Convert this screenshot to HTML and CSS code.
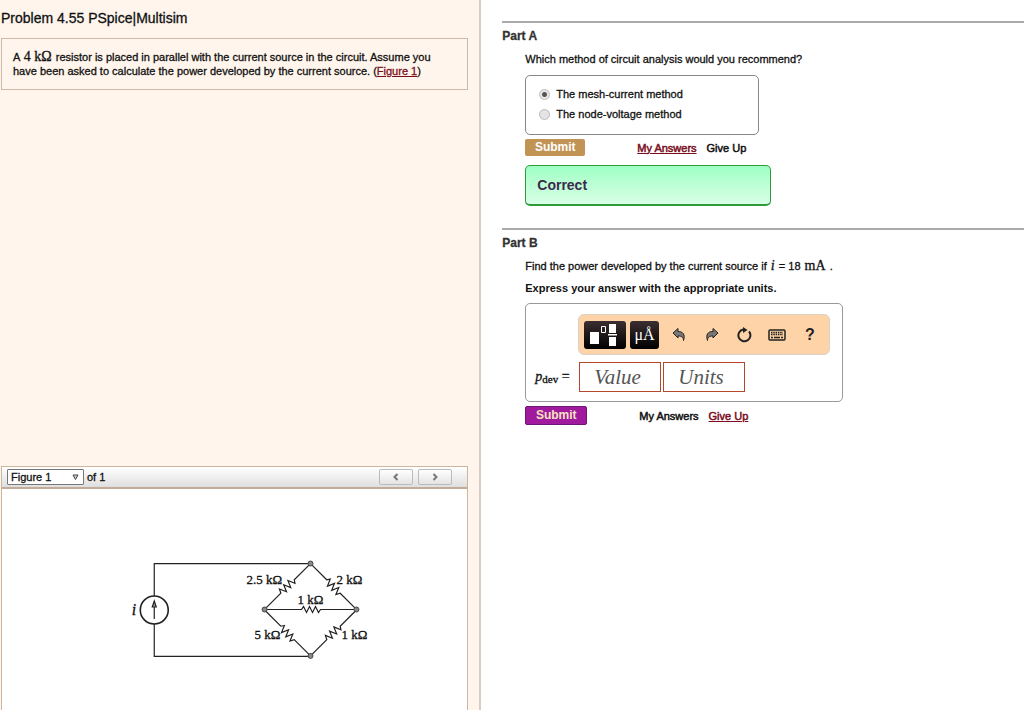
FILE: index.html
```html
<!DOCTYPE html>
<html lang="en">
<head>
    <meta charset="utf-8">
    <title>Problem 4.55 PSpice|Multisim</title>
    <link rel="stylesheet" href="styles.css">
</head>
<body>
    <div class="problem-pane">
        <h1>Problem 4.55 PSpice|Multisim</h1>
        <p class="problem-text">A <span class="math">4 kΩ</span> resistor is placed in parallel with the current source in the circuit. Assume you have been asked to calculate the power developed by the current source. (<a href="#figure">Figure 1</a>)</p>

        <section class="figure" id="figure">
            <div class="figure-bar">
                <div class="select-wrap">
                    <select id="figure-select" aria-label="Figure">
                        <option>Figure 1</option>
                    </select>
                    <svg width="7" height="7" viewBox="0 0 7 7"><path d="M1 1h5L3.5 5.5z" fill="#ccc" stroke="#444"/></svg>
                </div>
                <label for="figure-select">of 1</label>
                <div class="figure-nav">
                    <button type="button" aria-label="Previous figure"><svg width="8" height="8" viewBox="0 0 8 8"><path d="M5.5 1L2.5 4l3 3"/></svg></button>
                    <button type="button" aria-label="Next figure"><svg width="8" height="8" viewBox="0 0 8 8"><path d="M2.5 1l3 3-3 3"/></svg></button>
                </div>
            </div>
            <div class="figure-body">
                <svg class="circuit" width="466" height="221" viewBox="1 489 466 221">
                    <defs>
                        <path id="resistor" d="M0 0H23l2-3 3 7 3-7 3 7 3-7 3 7 2-4H65"/>
                    </defs>
                    <g fill="none" stroke="#222" stroke-width="1.2">
                        <path d="M310 563.5H153.5V596M153.5 624V656.5H310"/>
                        <circle cx="153.5" cy="610" r="14" stroke-width="1.6"/>
                        <path d="M153.5 619V607"/>
                        <path d="M153.5 601l-2 6h4z" fill="#999"/>
                        <use href="#resistor" transform="translate(310 563.5) rotate(135)"/>
                        <use href="#resistor" transform="translate(310 563.5) rotate(45)"/>
                        <use href="#resistor" transform="translate(264 610) rotate(45)"/>
                        <use href="#resistor" transform="translate(356 610) rotate(135)"/>
                        <path d="M264 609.5H301l2-3 3 6 3-6 3 6 3-6 3 6 2-3H356"/>
                    </g>
                    <g fill="#888" stroke="#444">
                        <circle cx="310" cy="563.5" r="2.5"/>
                        <circle cx="264" cy="609.5" r="2.5"/>
                        <circle cx="356" cy="609.5" r="2.5"/>
                        <circle cx="310" cy="656" r="2.5"/>
                    </g>
                    <text x="131" y="615" class="var">i</text>
                    <text x="246" y="584">2.5 kΩ</text>
                    <text x="336" y="584">2 kΩ</text>
                    <text x="297" y="604">1 kΩ</text>
                    <text x="254" y="639">5 kΩ</text>
                    <text x="341" y="639">1 kΩ</text>
                </svg>
            </div>
        </section>
    </div>

    <main class="parts-pane">
        <section class="part">
            <h2>Part A</h2>
            <div class="part-body">
                <p>Which method of circuit analysis would you recommend?</p>
                <div class="choices">
                    <label><input type="radio" name="method" checked>The mesh-current method</label>
                    <label><input type="radio" name="method">The node-voltage method</label>
                </div>
                <div class="actions">
                    <button type="button" class="submit submit-done">Submit</button>
                    <a href="#answers">My Answers</a>
                    <span>Give Up</span>
                </div>
                <div class="feedback">Correct</div>
            </div>
        </section>

        <section class="part">
            <h2>Part B</h2>
            <div class="part-body">
                <p>Find the power developed by the current source if <span class="math"><i>i</i></span> = 18 <span class="math">mA</span> .</p>
                <p class="instructions">Express your answer with the appropriate units.</p>
                <div class="answer-box">
                    <div class="toolbar">
                        <button type="button" class="dark" aria-label="Templates">
                            <svg width="42" height="28" viewBox="0 0 42 28"><g fill="#fff"><path d="M6 11h9v12H6zM25 3h7v9h-7zM25 16h7v9h-7zM24 13h9v1.500h-9z"/></g><path d="M17.500 5.500h4v6h-4z" fill="none" stroke="#fff"/></svg>
                        </button>
                        <button type="button" class="dark symbols">μÅ</button>
                        <button type="button" class="tool" aria-label="Undo">
                            <svg width="16" height="16" viewBox="0 0 16 16"><path d="M2 6l5-4.500v3c5 0 7.500 3 5.500 9 0-3-1.500-4.500-5.500-4.500v2z" fill="#777" stroke="#222"/></svg>
                        </button>
                        <button type="button" class="tool" aria-label="Redo">
                            <svg width="16" height="16" viewBox="0 0 16 16"><path d="M14 6L9 1.500v3c-5 0-7.500 3-5.500 9 0-3 1.500-4.500 5.500-4.500v2z" fill="#777" stroke="#222"/></svg>
                        </button>
                        <button type="button" class="tool" aria-label="Reset">
                            <svg width="16" height="16" viewBox="0 0 16 16"><path d="M12 4.500A6 6 0 1 1 6 2.500" fill="none" stroke="#222" stroke-width="2"/><path d="M6 0l4.500 3L6 6z" fill="#222"/></svg>
                        </button>
                        <button type="button" class="tool" aria-label="Keyboard">
                            <svg width="18" height="12" viewBox="0 0 18 12"><rect x="1" y="1" width="16" height="10" rx="1" fill="#fbd0a2" stroke="#222" stroke-width="1.500"/><path d="M3 3.500h12M3 5.500h12" stroke="#222" stroke-width="1.500" stroke-dasharray="1.500 .8"/><path d="M3 8.500h2M6 8.500h6M13 8.500h2" stroke="#222" stroke-width="1.500"/></svg>
                        </button>
                        <button type="button" class="tool help">?</button>
                    </div>
                    <div class="answer-row">
                        <label for="value"><i>p</i><sub>dev</sub> =</label>
                        <input type="text" id="value" placeholder="Value">
                        <input type="text" id="units" placeholder="Units" aria-label="Units">
                    </div>
                </div>
                <div class="actions">
                    <button type="button" class="submit submit-active">Submit</button>
                    <span>My Answers</span>
                    <a href="#giveup">Give Up</a>
                </div>
            </div>
        </section>
    </main>
</body>
</html>
```

FILE: styles.css
```css
* {
    box-sizing: border-box;
}

body {
    margin: 0;
    display: flex;
    min-height: 100vh;
    background: #fff;
    color: #111;
    font-family: "Liberation Sans", Arial, sans-serif;
    font-size: 11px;
    line-height: 14px;
    -webkit-text-stroke: 0.3px;
}

h1, h2, p {
    margin: 0;
}

a {
    color: #7a0d1c;
}

button {
    padding: 0;
    cursor: pointer;
}

.math {
    margin: 0 1px;
    font-family: "Liberation Serif", "Times New Roman", serif;
    font-size: 14px;
    line-height: 1;
}

/* left side */
.problem-pane {
    display: flex;
    flex-direction: column;
    width: 47%;
    padding: 9px 11px 0 1px;
    background: #fff5ec;
    border-right: 2px solid #d9cdc3;
}

h1 {
    font-size: 14px;
    font-weight: normal;
    line-height: 18px;
}

.problem-text {
    margin-top: 11px;
    padding: 11px 20px 11px 11px;
    border: 1px solid #cdb9a8;
}

.figure {
    margin-top: auto;
    border: 1px solid #cbb69f;
    border-bottom: 0;
    background: #fff;
}

.figure-bar {
    display: flex;
    align-items: center;
    gap: 3px;
    height: 22px;
    padding: 0 15px 0 5px;
    background: linear-gradient(#fff, #dfdfdf);
    border-bottom: 2px solid #c4ab98;
}

.select-wrap {
    position: relative;
}

.select-wrap select {
    display: block;
    width: 77px;
    height: 16px;
    padding: 0 3px;
    appearance: none;
    background: #fff;
    border: 1px solid #777;
    border-radius: 1px;
    color: #111;
    font: inherit;
    line-height: 14px;
    -webkit-text-stroke: inherit;
}

.select-wrap svg {
    position: absolute;
    top: 5px;
    right: 5px;
    pointer-events: none;
}

.figure-nav {
    display: flex;
    gap: 5px;
    margin-left: auto;
}

.figure-nav button {
    display: flex;
    align-items: center;
    justify-content: center;
    width: 34px;
    height: 16px;
    background: linear-gradient(#fff, #e4e4e4);
    border: 1px solid #bbb;
    border-radius: 2px;
}

.figure-nav path {
    fill: none;
    stroke: #777;
    stroke-width: 2;
}

.circuit {
    display: block;
    max-width: 100%;
}

.circuit text {
    font-family: "Liberation Serif", "Times New Roman", serif;
    font-size: 13px;
    fill: #111;
    stroke: #111;
    stroke-width: 0.3px;
    -webkit-text-stroke: 0;
}

.circuit .var {
    font-size: 16px;
    font-style: italic;
}

/* right side */
.parts-pane {
    flex: 1;
    padding: 21px 0 0 21px;
}

.part {
    padding-top: 6px;
    border-top: 2px solid #aaa;
}

.part + .part {
    margin-top: 22px;
}

h2 {
    font-size: 12px;
    line-height: 14px;
    color: #333;
}

.part-body {
    padding: 9px 0 0 23px;
}

.choices {
    display: flex;
    flex-direction: column;
    gap: 6px;
    width: 234px;
    height: 60px;
    margin-top: 9px;
    padding: 11px 12px;
    border: 1px solid #888;
    border-radius: 5px;
}

.choices label {
    display: flex;
    align-items: center;
    gap: 5px;
}

.choices input {
    width: 11px;
    height: 11px;
    margin: 0 1px;
    appearance: none;
    background: #e4e4e4;
    border: 1px solid #bbb;
    border-radius: 50%;
}

.choices input:checked {
    background: radial-gradient(circle, #555 0 2px, #e8e8e8 3px);
}

.actions {
    display: flex;
    align-items: center;
    gap: 10px;
    margin-top: 4px;
    -webkit-text-stroke: 0.5px;
}

.submit {
    height: 17px;
    border-radius: 2px;
    font-family: inherit;
    font-size: 12px;
    font-weight: bold;
    line-height: 15px;
    -webkit-text-stroke: 0;
}

.submit + * {
    margin-left: 42px;
}

.submit-done {
    width: 60px;
    border: 0;
    background: #c19355;
    color: #fff;
}

.submit-active {
    width: 62px;
    height: 19px;
    border: 1px solid #6d1673;
    background: #a01a9e;
    color: #fbe3c0;
}

.feedback {
    width: 246px;
    margin-top: 9px;
    padding: 12px 11px;
    border: 1px solid #2f9a3c;
    border-bottom-width: 2px;
    border-radius: 5px;
    background: linear-gradient(#9fffc4, #d9ffe6);
    color: #3b2a4e;
    font-size: 14px;
    font-weight: bold;
    -webkit-text-stroke: 0;
}

.instructions {
    margin-top: 8px;
    font-weight: bold;
    -webkit-text-stroke: 0;
}

.answer-box {
    width: 318px;
    margin-top: 8px;
    padding: 10px 12px 9px 9px;
    border: 1px solid #999;
    border-radius: 5px;
}

.toolbar {
    display: flex;
    align-items: center;
    gap: 4px;
    height: 41px;
    margin-left: 43px;
    padding: 0 5px;
    background: #fed3a7;
    border: 1px solid #ddd0c4;
    border-radius: 6px;
}

.dark {
    width: 42px;
    height: 28px;
    border: 0;
    border-radius: 3px;
    background: linear-gradient(#3c2e31, #000);
    color: #fff;
}

.dark svg {
    display: block;
}

.symbols {
    width: 29px;
    font-family: "Liberation Serif", "Times New Roman", serif;
    font-size: 16px;
    -webkit-text-stroke: 0;
}

.tool {
    display: flex;
    align-items: center;
    justify-content: center;
    width: 29px;
    height: 28px;
    border: 0;
    background: none;
    color: #222;
}

.symbols + .tool {
    margin-left: 2px;
}

.help {
    font-family: inherit;
    font-size: 16px;
    font-weight: bold;
    -webkit-text-stroke: 0;
}

.answer-row {
    display: flex;
    align-items: center;
    gap: 2px;
    margin-top: 7px;
}

.answer-row label {
    width: 42px;
    font-family: "Liberation Serif", "Times New Roman", serif;
    font-size: 14px;
}

.answer-row sub {
    font-size: 11px;
    line-height: 1;
    vertical-align: -2px;
}

.answer-row input {
    width: 82px;
    height: 30px;
    padding: 0 14px;
    border: 1px solid #b5482c;
    background: #fff;
    font-family: "Liberation Serif", "Times New Roman", serif;
    font-size: 21px;
    font-style: italic;
    -webkit-text-stroke: 0;
}

.answer-row input::placeholder {
    color: #555;
    opacity: 1;
}
```
